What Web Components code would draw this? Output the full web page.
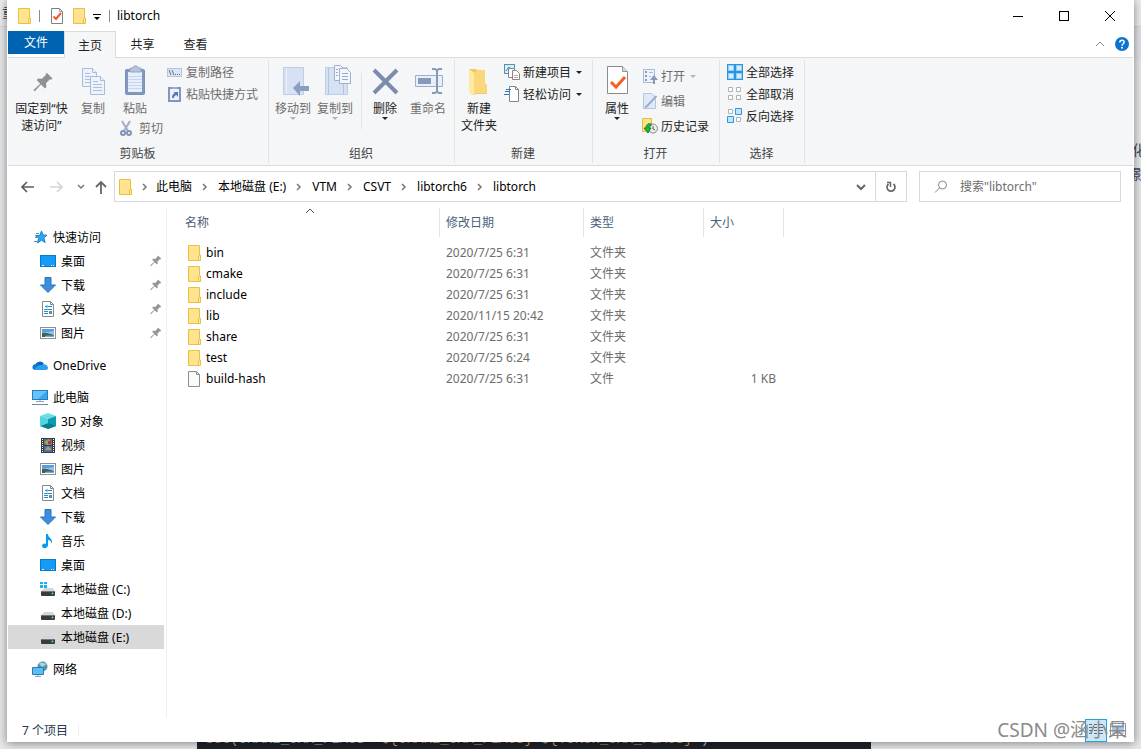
<!DOCTYPE html>
<html lang="zh-CN">
<head>
<meta charset="UTF-8">
<title>libtorch</title>
<style>
  html, body { margin: 0; height: 100%; }
  body {
    overflow: hidden;
    font: 12px/17px "Noto Sans", "Noto Sans CJK SC", sans-serif;
    color: #000;
    background: #e6e7e9;
  }
</style>
</head>
<body>
<file-explorer></file-explorer>

<script>
// =========================================================
// Icons
// =========================================================

const svg = (w, h, body) => `<svg width="${w}" height="${h}" viewBox="0 0 ${w} ${h}" fill="none" aria-hidden="true">${body}</svg>`;

const pinShape = 'M11 1l4 4-1 1-1-.4-3 3 .3 2.9-1.1 1.1-3-3-4.6 5H.6v-1l5-4.600-2.800-2.900 1.200-1.100 2.900.2 3.100-3-.4-1z';

const picture = `<rect x=".5" y="2.500" width="15" height="11" fill="#fff" stroke="#8c9197"/><rect x="2" y="4" width="12" height="8" fill="#8ec3ec"/><path d="M2 4h12v2c-4 0-8 2-12 1z" fill="#5a9be0"/><path d="M2 8c4-1 7 1 12 2v2H2z" fill="#38625a"/><path d="M5 11c4-1 6 0 9-.5V12H5z" fill="#7fa9c4"/>`;
const drive = `<path d="M4 7h9l2 3.500H1z" fill="#d4d6d8"/><rect x="1" y="10" width="14" height="5" rx="1" fill="#393c3e"/><path d="M1.500 10.500h13" stroke="#777"/><circle cx="12.500" cy="12.500" r="1" fill="#5fe36a"/>`;

const ICONS = {
  folder: svg(16, 16, `<path d="M1.500.5h11v10h1v5h-12z" fill="#ffe38f" stroke="#e9c13e"/><path d="M11.500 15V11l1-1h1v5" fill="#ffe9a8" stroke="#e9c13e"/>`),
  check: svg(14, 16, `<path d="M1.500.5h8l3 3v12h-11z" fill="#fff" stroke="#7d8085"/><path d="M9.500.5v3h3" stroke="#9a9da1"/><path d="M3.500 8.500L6 11l5-6" stroke="#f05a22" stroke-width="2"/>`),
  file: svg(16, 16, `<path d="M1.500.5h8l3 3v12h-11z" fill="#fafafa" stroke="#8c8c8c"/><path d="M9.500.5v3h3" stroke="#8c8c8c"/>`),
  qat: svg(8, 8, `<path d="M0 1.500h8" stroke="#000"/><path d="M1 4h6L4 7z" fill="#000"/>`),
  min: svg(10, 10, `<path d="M0 5.500h10" stroke="#000"/>`),
  max: svg(10, 10, `<rect x=".5" y=".5" width="9" height="9" stroke="#000"/>`),
  close: svg(10, 10, `<path d="M0 0l10 10M10 0L0 10" stroke="#000"/>`),
  up: svg(10, 6, `<path d="M1 5l4-4 4 4" stroke="#888"/>`),
  sort: svg(10, 6, `<path d="M1 5l4-4 4 4" stroke="#555"/>`),
  help: svg(14, 14, `<circle cx="7" cy="7" r="7" fill="#0a74d0"/><path d="M4.800 5.400c0-3 4.400-2.900 4.400-.3C9.200 6.800 7 6.700 7 8.700" stroke="#fff" stroke-width="1.500"/><circle cx="7" cy="10.800" r="1" fill="#fff"/>`),
  back: svg(14, 14, `<path d="M7 2L2 7l5 5M2 7h12" stroke="#5d5d5d" stroke-width="1.700"/>`),
  forward: svg(14, 14, `<path d="M7 2l5 5-5 5M12 7H0" stroke="#d4d4d4" stroke-width="1.700"/>`),
  recent: svg(8, 8, `<path d="M1 2l3 3 3-3" stroke="#777" stroke-width="1.500"/>`),
  parent: svg(12, 14, `<path d="M1 7l5-5 5 5M6 2v12" stroke="#666" stroke-width="1.800"/>`),
  crumb: svg(6, 8, `<path d="M1 1l3 3-3 3" stroke="#777" stroke-width="1.500"/>`),
  drop: svg(10, 8, `<path d="M1 2l4 4 4-4" stroke="#666" stroke-width="2"/>`),
  refresh: svg(12, 12, `<path d="M3.500 3a4 4 0 1 0 5 0" stroke="#666" stroke-width="1.700"/><path d="M2 1.500h3.500V6" stroke="#666" stroke-width="1.500"/>`),
  search: svg(14, 14, `<circle cx="8.500" cy="5" r="4" stroke="#888"/><path d="M5.500 8L1 12.500" stroke="#888"/>`),

  // ribbon, large
  pin: svg(32, 32, `<g transform="translate(7 7) scale(1.300)"><path d="${pinShape}" fill="#8b9298"/></g>`),
  copy: svg(32, 32, `<g fill="#eef3fb" stroke="#a9bbd6"><path d="M5.500 3.500h10l4 4v14h-14z"/><path d="M13.500 11.500h10l4 4v14h-14z"/><path d="M15.500 3.500v4h4M23.500 11.500v4h4"/></g><path d="M8 8.500h5M8 11.500h5M8 14.500h5M8 17.500h5M16 16.500h5M16 19.500h9M16 22.500h9M16 25.500h9" stroke="#a9c0e2"/>`),
  paste: svg(32, 32, `<rect x="6.500" y="4.500" width="19" height="25" rx="1" fill="#8298c0" stroke="#7b91b8"/><path d="M9 7h14v20H9z" fill="#e9effa"/><path d="M11 7V3h3c0-3 5-3 5 0h3v4z" fill="#b8c3d7" stroke="#96a6c2"/><path d="M9 11.500h14M9 14.500h14M9 17.500h14M9 20.500h14M9 23.500h14" stroke="#c6d6f0"/>`),
  moveto: svg(32, 32, `<path d="M6.500 2.500h20v27h-20z" fill="#d6e2f3" stroke="#bfcde3"/><path d="M9.500 3v26" stroke="#eaf0f9"/><path d="M16 23l7-7v5h9v5h-9v5z" fill="#8b9dc0"/>`),
  copyto: svg(32, 32, `<path d="M6.500 2.500h22v27h-22z" fill="#d6e2f3" stroke="#bfcde3"/><path d="M9.500 3v26M24.500 19v10" stroke="#b3c3de"/><g fill="#f3f7fd" stroke="#9eb1cf"><path d="M15.500.5h6l3 3v12h-9z"/><path d="M20.500 3.500h7l4 4v11h-11z"/></g><path d="M23 8.500h6M23 11.500h6M23 14.500h6M17 4.500h2M17 7.500h2M17 10.500h2" stroke="#8eabd6"/>`),
  remove: svg(32, 32, `<path d="M5 5l23 23M28 5L5 28" stroke="#7b8cae" stroke-width="4"/>`),
  rename: svg(32, 32, `<path d="M3.500 10.500h27v11h-27z" fill="#e8eff9" stroke="#9bb0d0"/><path d="M6 13h13v6H6z" fill="#8599bd"/><path d="M20 4h3l2 1.500L27 4h3M25 5v22M20 28h3l2-1.500 2 1.500h3" stroke="#8699b8" stroke-width="2"/>`),
  newfolder: svg(32, 32, `<path d="M6 4h7l3 2h6v12l2 2v9H13l-3 1-4-3z" fill="#f4ca64"/><path d="M6 4l5 4v22l-5-3z" fill="#ffe9a4"/><path d="M11 8l4-3h7v13l2 2v8H11z" fill="#fbd77c"/>`),
  props: svg(32, 32, `<path d="M6.500 1.500h15l5 5v22h-20z" fill="#fff" stroke="#8b8b8b"/><path d="M21.500 1.500v5h5" fill="#ddd" stroke="#999"/><path d="M10 17l5 5 9-10" stroke="#f26322" stroke-width="3"/>`),

  // ribbon, small
  path: svg(16, 16, `<rect x=".5" y="4.500" width="14" height="8" fill="#dbe6f5" stroke="#b4c4de"/><path d="M2 6l2 5M5 6l2 5M8 10.500h1M10 10.500h1M12 10.500h1" stroke="#5d7295"/>`),
  shortcut: svg(16, 16, `<rect x="2" y="2" width="11" height="13" fill="#edf2fa" stroke="#8197bf" stroke-width="2"/><path d="M5 3V1h5v2z" fill="#a2b0ca"/><path d="M5 12c0-3 1-4 3-5L6 6h5v5L9.500 9C8 9.500 7 10 7 12z" fill="#5877b0"/>`),
  cut: svg(16, 16, `<path d="M2 1l6 10M10 1L4 11" stroke="#a2aec2" stroke-width="2"/><g stroke="#7e94bb" stroke-width="2"><circle cx="3" cy="13" r="2"/><circle cx="9" cy="13" r="2"/></g>`),
  newitem: svg(16, 16, `<rect x=".5" y=".5" width="10" height="9" fill="#d9ecf7" stroke="#5292b5"/><path d="M2 7l3-4 3 4" stroke="#4d839b"/><path d="M4.500 4.500h6v9h-6z" fill="#fff" stroke="#868686"/><path d="M8.500 6.500h4l3 3v6h-7z" fill="#fff" stroke="#868686"/><path d="M10 11.500h4M10 13.500h4" stroke="#e5a19b"/>`),
  easy: svg(16, 16, `<path d="M5.500.5h6l3 3v12h-9z" fill="#fff" stroke="#858585"/><path d="M11.500.5v3h3" stroke="#858585"/><path d="M2 3.500h5M1 5.500h5M0 8.500h5" stroke="#2877b8"/>`),
  open: svg(16, 16, `<path d="M1.500 1.500h11v13h-11z" fill="#eef3fa" stroke="#a7b9d5"/><path d="M3 3h2v2H3zM3 7h2v2H3zM3 11h2v2H3z" fill="#819cc7"/><path d="M7 4.500h4M7 8.500h2" stroke="#a7b9d5"/><path d="M11 16v-4H8l4-5 4 5h-3v4z" fill="#8799bb"/>`),
  edit: svg(16, 16, `<path d="M1.500.5h8l4 4v11h-12z" fill="#dfe9f7" stroke="#b7c6df"/><path d="M14.500 3L5 13l-2 1.500" stroke="#9cadc9" stroke-width="2"/>`),
  history: svg(16, 16, `<path d="M.5.5h9v13h-9z" fill="#ffe38b" stroke="#e6bd43"/><circle cx="11" cy="10.500" r="4.500" fill="#eee" stroke="#888"/><path d="M11 8v3l2 1" stroke="#555"/><path d="M9 6c-3-1-5 1-5 4H2l4 5 3-5H7c0-2 1-2 2-2z" fill="#24b43e" stroke="#16822c"/>`),
  all: svg(16, 16, `<path d="M0 0h16v16H0z" fill="#2e94e0"/><path d="M1 1h6v6H1zM9 1h6v6H9zM1 9h6v6H1zM9 9h6v6H9z" fill="#8ed0fb"/><path d="M2 2h4v4H2zM10 2h4v4h-4zM2 10h4v4H2zM10 10h4v4h-4z" fill="#d3eeff"/>`),
  none: svg(16, 16, `<path d="M1.500 1.500h4v4h-4zM9.500 1.500h4v4h-4zM1.500 9.500h4v4h-4zM9.500 9.500h4v4h-4z" fill="#fff" stroke="#b1b1b1"/>`),
  invert: svg(16, 16, `<path d="M1.500 1.500h4v4h-4zM9.500 9.500h4v4h-4z" fill="#fff" stroke="#b1b1b1"/><path d="M8.500.5h6v6h-6zM.5 8.500h6v6h-6z" fill="#c1e6fc" stroke="#3098df"/>`),

  // navigation pane
  star: svg(16, 16, `<path d="M9.500 2l1.500 4 4 .2-3.200 2.800 1.400 4.500-3.700-2.300-4 2.800 1-4.500L3.500 6.700l4.300-.2z" fill="#29a8ef" stroke="#1583c9"/><path d="M4 4.500h3M3 8.500h3M2 12.500h3" stroke="#5b91b4"/>`),
  desktop: svg(16, 16, `<rect x=".5" y="2.500" width="15" height="11" fill="#159bf5" stroke="#087ac8"/><path d="M2 12.500h2M11 12.500h1M13 12.500h1" stroke="#d3efff"/>`),
  download: svg(16, 16, `<path d="M5 .5h6V8h4.500L8 15.500.5 8H5z" fill="#398fdd" stroke="#2b75bd"/>`),
  doc: svg(16, 16, `<path d="M2.500.5h8l3 3v12h-11z" fill="#fff" stroke="#858a8f"/><path d="M10.500.5v3h3" stroke="#858a8f"/><path d="M5 5.500h2M8 5.500h4M4 8.500h8M4 10.500h4M4 12.500h4M7 4v3" stroke="#2591cb"/><path d="M9 10h3v3H9z" fill="#63899c"/>`),
  picture: svg(16, 16, picture),
  onedrive: svg(16, 16, `<path d="M3 8a5 5 0 0 1 9-1l-7 6z" fill="#0864b8"/><path d="M4 7c3 0 5 1 7 3l-6 3H3a3 3 0 0 1 1-6z" fill="#1679d0"/><path d="M9 8c3-2 7 0 7 3 0 1-1 2-2 2H2c2-3 4-4 7-5z" fill="#279fea"/>`),
  pc: svg(16, 16, `<rect x=".5" y="1.500" width="15" height="9" fill="#62c3ff" stroke="#2d7cab"/><path d="M15 2v8H6z" fill="#34a8f7"/><path d="M8 11v2M4 12.500h8" stroke="#8fa3b0"/><path d="M0 15.500h16" stroke="#748c9a"/>`),
  cube: svg(16, 16, `<path d="M0 3l8-3 8 3-8 3z" fill="#65e0e8"/><path d="M0 3l8 3v10l-8-3z" fill="#72e6ea"/><path d="M8 6l8-3v10l-8 3z" fill="#0b9cb2"/><path d="M0 13l8-3 8 3-8 3z" fill="#077e91"/><path d="M0 13l8-3V6L0 3z" fill="#54d3dc"/>`),
  video: svg(16, 16, `<path d="M1 1h14v15H1z" fill="#383a3c"/><path d="M4 2h8v6H4zM4 9h8v6H4z" fill="#3e73ca"/><path d="M4 5l5-3 3 5-5 1zM5 13l3-4 4 4z" fill="#c69b2e"/><path d="M8 4h3v3H8z" fill="#b73b28"/><path d="M2.500 2v13M13.500 2v13" stroke="#fff" stroke-dasharray="1 1"/>`),
  music: svg(16, 16, `<path d="M6 1h2c0 4 5 4 4 10-1-3-2-4-4-4v5c0 4-6 4-6 1 0-2 2-3 4-2z" fill="#079bf0"/>`),
  cdrive: svg(16, 16, drive + `<path d="M0 1h3v2H0zM4 1h3v2H4zM0 4h3v3H0zM4 4h3v3H4z" fill="#12b3ee"/>`),
  drive: svg(16, 16, drive),
  network: svg(16, 16, `<circle cx="10.500" cy="5.500" r="5" fill="#5595b2"/><path d="M7 3c3-4 5 1 8-1-1 3-4 2-4 4-2 0-2-2-4-3z" fill="#acd4db"/><path d="M.5 6.500h11v7H.5z" fill="#59bdf7" stroke="#2d7cab"/><path d="M6 14v1M3 15.500h6" stroke="#8aa5b8"/>`),
  pinned: svg(12, 12, `<g transform="scale(.75)"><path d="${pinShape}" fill="#8e979d"/></g>`),
  details: svg(16, 14, `<path d="M1 1.500h3M6 1.500h3M11 1.500h4M1 4.500h3M6 4.500h3M11 4.500h4M1 7.500h3M6 7.500h3M11 7.500h4M1 10.500h3M6 10.500h3M11 10.500h4" stroke="#5a6a76"/>`),
  thumbs: svg(16, 14, `<path d="M.5.5h15v12H.5z" fill="#fff" stroke="#8a949c"/><path d="M2 2h12v5H2z" fill="#a8c4ec"/><path d="M2 7h12v4H2z" fill="#c4cbd2"/>`),
};

// Small base: every element renders its shadow root once.
class BaseElement extends HTMLElement {
  connectedCallback() {
    if (this.shadowRoot) return;
    this.attachShadow({ mode: 'open' });
    this.shadowRoot.innerHTML = `
      <style>
        :host, * { box-sizing: border-box; }
        button, input, a { font: inherit; color: inherit; text-decoration: none; }
        button { border: 0; padding: 0; margin: 0; background: none; white-space: nowrap; }
      </style>${this.render()}`;
  }
}

class UiIcon extends BaseElement {
  render() {
    return `<style>:host { display: flex; flex: none; } svg { display: block; }</style>${ICONS[this.getAttribute('name')] || ''}`;
  }
}
customElements.define('ui-icon', UiIcon);

// =========================================================
// Title bar and tabs
// =========================================================

class TitleBar extends BaseElement {
  render() {
    return `
      <style>
        :host { display: flex; height: 31px; align-items: center; padding-left: 9px; }
        .quick { display: flex; align-items: center; flex: 1; }
        .bar { width: 1px; height: 12px; background: #8c8c8c; }
        .quick button { display: flex; }
        .check { margin: 0 8px 0 10px; }
        .menu { margin: 3px 8px 0 5px; }
        .first { margin-right: 6px; }
        slot { display: block; margin-left: 7px; }
        .controls { display: flex; }
        .controls button { width: 46px; height: 30px; display: flex; align-items: center; justify-content: center; }
      </style>
      <div class="quick">
        <ui-icon class="first" name="folder"></ui-icon><span class="bar"></span>
        <button class="check" aria-label="属性"><ui-icon name="check"></ui-icon></button>
        <button aria-label="新建文件夹"><ui-icon name="folder"></ui-icon></button>
        <button class="menu" aria-label="自定义快速访问工具栏"><ui-icon name="qat"></ui-icon></button>
        <span class="bar"></span>
        <slot></slot>
      </div>
      <div class="controls">
        <button aria-label="最小化"><ui-icon name="min"></ui-icon></button>
        <button aria-label="最大化"><ui-icon name="max"></ui-icon></button>
        <button aria-label="关闭"><ui-icon name="close"></ui-icon></button>
      </div>`;
  }
}
customElements.define('title-bar', TitleBar);

class RibbonTabs extends BaseElement {
  render() {
    return `
      <style>
        :host { display: flex; height: 27px; border-bottom: 1px solid #dadbdc; }
        button { width: 53px; height: 26px; color: #222; }
        .file { height: 23px; width: 56px; background: #0063b1; color: #fff; }
        .active { height: 27px; width: 52px; background: #f5f6f7; border: 1px solid #dadbdc; border-bottom: 0; }
        .right { margin-left: auto; display: flex; align-items: center; gap: 10px; padding-right: 4px; }
        .right button { display: flex; width: auto; height: auto; }
      </style>
      <button class="file">文件</button>
      <button class="active">主页</button>
      <button>共享</button>
      <button>查看</button>
      <div class="right">
        <button aria-label="最小化功能区"><ui-icon name="up"></ui-icon></button>
        <button aria-label="帮助"><ui-icon name="help"></ui-icon></button>
      </div>`;
  }
}
customElements.define('ribbon-tabs', RibbonTabs);

// =========================================================
// Ribbon
// =========================================================

class RibbonGroup extends BaseElement {
  render() {
    return `
      <style>
        :host { display: flex; flex-direction: column; padding: 1px 4px 1px 3px; margin: 2px 0; border-right: 1px solid #e2e3e4; }
        .body { display: flex; flex: 1; }
        .name { text-align: center; color: #444; }
      </style>
      <div class="body"><slot></slot></div>
      <div class="name">${this.getAttribute('label')}</div>`;
  }
}
customElements.define('ribbon-group', RibbonGroup);

// Large button: icon above the label
class RibbonButton extends BaseElement {
  render() {
    const menu = this.hasAttribute('menu') ? '<i></i>' : '';
    return `
      <style>
        :host { display: block; width: 42px; padding-top: 4px; color: #222; }
        :host([off]) { color: #6d6d6d; }
        button { display: flex; flex-direction: column; align-items: center; width: 100%; }
        .label { margin-top: 3px; }
        i { border: 3px solid transparent; border-top-color: #222; border-bottom: 0; }
        :host([off]) i { border-top-color: #b4b4b4; }
      </style>
      <button ${this.hasAttribute('off') ? 'disabled' : ''}>
        <ui-icon name="${this.getAttribute('icon')}"></ui-icon>
        <span class="label"><slot></slot></span>${menu}
      </button>`;
  }
}
customElements.define('ribbon-button', RibbonButton);

// Small button: icon beside the label
class RibbonItem extends BaseElement {
  render() {
    const menu = this.hasAttribute('menu') ? '<i></i>' : '';
    return `
      <style>
        :host { display: block; color: #222; }
        :host([off]) { color: #6d6d6d; }
        button { display: flex; align-items: center; gap: 3px; height: 22px; }
        i { margin-left: 2px; border: 3px solid transparent; border-top-color: #222; border-bottom: 0; }
        :host([off]) i { border-top-color: #b4b4b4; }
      </style>
      <button ${this.hasAttribute('off') ? 'disabled' : ''}>
        <ui-icon name="${this.getAttribute('icon')}"></ui-icon><slot></slot>${menu}
      </button>`;
  }
}
customElements.define('ribbon-item', RibbonItem);

class RibbonBar extends BaseElement {
  render() {
    return `
      <style>
        :host { display: flex; height: 108px; background: #f5f6f7; border-bottom: 1px solid #dadbdc; }
        .wide { width: 61px; }
        .stack { display: flex; flex-direction: column; }
        .side { padding: 0 6px 0 4px; }
        .loose { gap: 3px; padding-top: 4px; }
        .cut { margin-left: 6px; }
        .divider { width: 1px; height: 56px; margin: 12px 2px 0 5px; background: #e2e3e4; }
        .rename { width: 44px; }
      </style>
      <ribbon-group label="剪贴板">
        <ribbon-button class="wide" icon="pin">固定到“快<br>速访问”</ribbon-button>
        <ribbon-button icon="copy" off>复制</ribbon-button>
        <div class="stack">
          <ribbon-button icon="paste" off>粘贴</ribbon-button>
          <ribbon-item class="cut" icon="cut" off>剪切</ribbon-item>
        </div>
        <div class="stack side">
          <ribbon-item icon="path" off>复制路径</ribbon-item>
          <ribbon-item icon="shortcut" off>粘贴快捷方式</ribbon-item>
        </div>
      </ribbon-group>
      <ribbon-group label="组织">
        <ribbon-button icon="moveto" off menu>移动到</ribbon-button>
        <ribbon-button icon="copyto" off menu>复制到</ribbon-button>
        <span class="divider"></span>
        <ribbon-button icon="remove" menu>删除</ribbon-button>
        <ribbon-button class="rename" icon="rename" off>重命名</ribbon-button>
      </ribbon-group>
      <ribbon-group label="新建">
        <ribbon-button icon="newfolder">新建<br>文件夹</ribbon-button>
        <div class="stack side">
          <ribbon-item icon="newitem" menu>新建项目</ribbon-item>
          <ribbon-item icon="easy" menu>轻松访问</ribbon-item>
        </div>
      </ribbon-group>
      <ribbon-group label="打开">
        <ribbon-button icon="props" menu>属性</ribbon-button>
        <div class="stack side loose">
          <ribbon-item icon="open" off menu>打开</ribbon-item>
          <ribbon-item icon="edit" off>编辑</ribbon-item>
          <ribbon-item icon="history">历史记录</ribbon-item>
        </div>
      </ribbon-group>
      <ribbon-group label="选择">
        <div class="stack side">
          <ribbon-item icon="all">全部选择</ribbon-item>
          <ribbon-item icon="none">全部取消</ribbon-item>
          <ribbon-item icon="invert">反向选择</ribbon-item>
        </div>
      </ribbon-group>`;
  }
}
customElements.define('ribbon-bar', RibbonBar);

// =========================================================
// Address bar
// =========================================================

class AddressBar extends BaseElement {
  render() {
    const crumbs = ['此电脑', '本地磁盘 (E:)', 'VTM', 'CSVT', 'libtorch6', 'libtorch'];
    return `
      <style>
        :host { display: flex; align-items: center; height: 41px; padding-right: 12px; }
        button { display: flex; align-items: center; justify-content: center; }
        .history { display: flex; align-items: center; width: 106px; padding-left: 12px; }
        .forward { margin: 0 13px 0 16px; }
        .parent { margin-left: 10px; }
        .address { flex: 1; display: flex; align-items: center; height: 31px; border: 1px solid #d9d9d9; padding-left: 3px; }
        .sep { width: 26px; display: flex; justify-content: center; }
        .sep:first-of-type { width: 22px; }
        .drop { margin-left: auto; width: 29px; height: 29px; }
        .refresh { width: 31px; height: 29px; border-left: 1px solid #d9d9d9; }
        .search { display: flex; align-items: center; gap: 12px; width: 202px; height: 31px; margin-left: 12px; padding: 0 8px 0 14px; border: 1px solid #d9d9d9; }
        input { flex: 1; min-width: 0; border: 0; padding: 0; background: none; outline: 0; }
        input::placeholder { color: #6d6d6d; opacity: 1; }
      </style>
      <nav class="history" aria-label="历史">
        <button aria-label="后退"><ui-icon name="back"></ui-icon></button>
        <button class="forward" aria-label="前进" disabled><ui-icon name="forward"></ui-icon></button>
        <button aria-label="最近浏览的位置"><ui-icon name="recent"></ui-icon></button>
        <button class="parent" aria-label="上移"><ui-icon name="parent"></ui-icon></button>
      </nav>
      <div class="address">
        <ui-icon name="folder"></ui-icon>
        ${crumbs.map(c => `<span class="sep"><ui-icon name="crumb"></ui-icon></span><a href="#">${c}</a>`).join('')}
        <button class="drop" aria-label="以前的位置"><ui-icon name="drop"></ui-icon></button>
        <button class="refresh" aria-label="刷新"><ui-icon name="refresh"></ui-icon></button>
      </div>
      <label class="search">
        <ui-icon name="search"></ui-icon>
        <input type="text" placeholder='搜索"libtorch"' aria-label='搜索"libtorch"'>
      </label>`;
  }
}
customElements.define('address-bar', AddressBar);

// =========================================================
// Navigation pane
// =========================================================

class NavItem extends BaseElement {
  render() {
    const pin = this.hasAttribute('pinned') ? '<ui-icon class="pin" name="pinned"></ui-icon>' : '';
    return `
      <style>
        :host { display: block; }
        a { display: flex; align-items: center; gap: 5px; height: 24px; padding: 0 2px 0 32px; white-space: nowrap; }
        :host([root]) a { padding-left: 24px; }
        :host([selected]) a { background: #d9d9d9; }
        .pin { margin-left: auto; }
      </style>
      <a href="#"><ui-icon name="${this.getAttribute('icon')}"></ui-icon><slot></slot>${pin}</a>`;
  }
}
customElements.define('nav-item', NavItem);

class NavPane extends BaseElement {
  render() {
    return `
      <style>
        :host { display: flex; flex-direction: column; gap: 8px; width: 156px; padding-top: 18px; }
      </style>
      <div>
        <nav-item root icon="star">快速访问</nav-item>
        <nav-item icon="desktop" pinned>桌面</nav-item>
        <nav-item icon="download" pinned>下载</nav-item>
        <nav-item icon="doc" pinned>文档</nav-item>
        <nav-item icon="picture" pinned>图片</nav-item>
      </div>
      <nav-item root icon="onedrive">OneDrive</nav-item>
      <div>
        <nav-item root icon="pc">此电脑</nav-item>
        <nav-item icon="cube">3D 对象</nav-item>
        <nav-item icon="video">视频</nav-item>
        <nav-item icon="picture">图片</nav-item>
        <nav-item icon="doc">文档</nav-item>
        <nav-item icon="download">下载</nav-item>
        <nav-item icon="music">音乐</nav-item>
        <nav-item icon="desktop">桌面</nav-item>
        <nav-item icon="cdrive">本地磁盘 (C:)</nav-item>
        <nav-item icon="drive">本地磁盘 (D:)</nav-item>
        <nav-item icon="drive" selected>本地磁盘 (E:)</nav-item>
      </div>
      <nav-item root icon="network">网络</nav-item>`;
  }
}
customElements.define('nav-pane', NavPane);

// =========================================================
// File list
// =========================================================

class FileTable extends BaseElement {
  render() {
    const files = [
      ['folder', 'bin', '2020/7/25 6:31', '文件夹', ''],
      ['folder', 'cmake', '2020/7/25 6:31', '文件夹', ''],
      ['folder', 'include', '2020/7/25 6:31', '文件夹', ''],
      ['folder', 'lib', '2020/11/15 20:42', '文件夹', ''],
      ['folder', 'share', '2020/7/25 6:31', '文件夹', ''],
      ['folder', 'test', '2020/7/25 6:24', '文件夹', ''],
      ['file', 'build-hash', '2020/7/25 6:31', '文件', '1 KB'],
    ];
    return `
      <style>
        :host { display: block; flex: 1; padding-top: 1px; }
        table { table-layout: fixed; width: 617px; border-collapse: separate; border-spacing: 0; }
        th, td { padding: 0 8px 0 6px; text-align: left; font-weight: normal; white-space: nowrap; }
        th { position: relative; height: 29px; color: #4c607a; border-right: 1px solid #e5e5e5; }
        th:first-child { width: 273px; padding-left: 18px; }
        th:nth-child(2) { width: 144px; }
        th:nth-child(3) { width: 120px; }
        .sort { position: absolute; left: 138px; top: 0; }
        td { height: 21px; color: #6d6d6d; }
        td:first-child { padding-left: 20px; color: #000; }
        td:last-child { text-align: right; }
        .name { display: flex; align-items: center; gap: 3px; }
        .gap td { height: 5px; }
      </style>
      <table>
        <thead>
          <tr><th>名称<ui-icon class="sort" name="sort"></ui-icon></th><th>修改日期</th><th>类型</th><th>大小</th></tr>
        </thead>
        <tbody>
          <tr class="gap"><td colspan="4"></td></tr>
          ${files.map(([icon, name, date, type, size]) => `
          <tr><td><div class="name"><ui-icon name="${icon}"></ui-icon>${name}</div></td><td>${date}</td><td>${type}</td><td>${size}</td></tr>`).join('')}
        </tbody>
      </table>`;
  }
}
customElements.define('file-table', FileTable);

class StatusBar extends BaseElement {
  render() {
    return `
      <style>
        :host { display: flex; align-items: center; height: 24px; padding-left: 14px; color: #26374f; }
        .bar { width: 1px; height: 12px; margin-left: 10px; background: #eee; }
        .views { display: flex; margin-left: auto; padding-right: 5px; }
        button { display: flex; align-items: center; justify-content: center; width: 21px; height: 23px; }
        .active { width: 22px; border: 1px solid #26a0da; background: #cce8f7; }
      </style>
      <slot></slot><span class="bar"></span>
      <div class="views">
        <button class="active" aria-label="详细信息"><ui-icon name="details"></ui-icon></button>
        <button aria-label="大缩略图"><ui-icon name="thumbs"></ui-icon></button>
      </div>`;
  }
}
customElements.define('status-bar', StatusBar);

// =========================================================
// Desktop: page behind, explorer window, watermark
// =========================================================

class PageBehind extends BaseElement {
  render() {
    return `
      <style>
        :host { display: block; position: absolute; inset: 0; overflow: hidden; color: #42485c; }
        .top { height: 27px; background: #ececee; border-bottom: 1px solid #d5d6d9; }
        .tools { height: 32px; background: #e0e1e6; margin-left: 50%; }
        .code { position: absolute; left: 197px; right: 270px; bottom: 0; height: 24px; padding-left: 8px; background: #1e222a; color: #abb2bf; font: 14px/28px "Liberation Mono", monospace; white-space: pre; }
        .code b { font-weight: normal; color: #d19a66; }
        .char { position: absolute; font-size: 14px; line-height: 20px; }
      </style>
      <div class="top"></div>
      <div class="tools"></div>
      <span class="char" style="left: 2px; top: 3px">重</span>
      <span class="char" style="left: calc(100% - 9px); top: 140px">化</span>
      <span class="char" style="left: calc(100% - 9px); top: 164px">影</span>
      <div class="code"><b>set</b>(CMAKE_CXX_FLAGS <b>"\${CMAKE_CXX_FLAGS} \${TORCH_CXX_FLAGS}"</b>)</div>`;
  }
}
customElements.define('page-behind', PageBehind);

class FileExplorer extends BaseElement {
  render() {
    return `
      <style>
        :host { display: flex; position: relative; height: 100vh; padding: 0 7px 7px; overflow: hidden; }
        .window { position: relative; flex: 1; min-width: 0; display: flex; flex-direction: column; background: #fff; padding: 0 1px; box-shadow: 0 1px 9px rgba(0, 0, 0, .45); }
        .content { display: flex; flex: 1; min-height: 0; }
        .splitter { width: 1px; margin: 2px 0 0 2px; background: #f0f0f0; }
        .watermark { position: absolute; right: 14px; bottom: 6px; font-size: 19px; line-height: 26px; color: #8a8a8a; pointer-events: none; }
      </style>
      <page-behind></page-behind>
      <main class="window">
        <title-bar>libtorch</title-bar>
        <ribbon-tabs></ribbon-tabs>
        <ribbon-bar></ribbon-bar>
        <address-bar></address-bar>
        <div class="content">
          <nav-pane></nav-pane>
          <span class="splitter"></span>
          <file-table></file-table>
        </div>
        <status-bar>7 个项目</status-bar>
      </main>
      <div class="watermark">CSDN @涵小呆</div>`;
  }
}
customElements.define('file-explorer', FileExplorer);
</script>
</body>
</html>
